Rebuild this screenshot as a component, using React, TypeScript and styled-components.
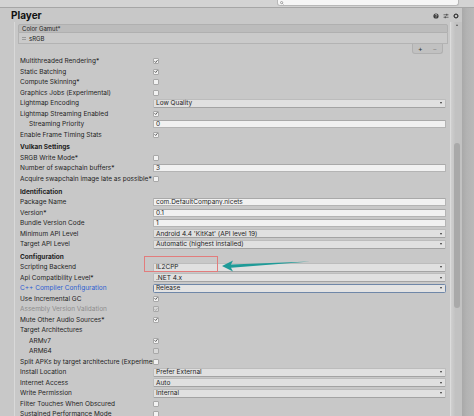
import React from "react";
import styled, { createGlobalStyle, css } from "styled-components";

const Global = createGlobalStyle`
  html, body { margin: 0; padding: 0; background: #c8c8c8; }
  body { font-family: Inter, "Liberation Sans", Arial, sans-serif; }
  #root { width: 474px; height: 416px; }
`;

const Window = styled.div`
  position: relative;
  width: 474px;
  height: 416px;
  overflow: hidden;
  background: #c8c8c8;
  display: flex;
  flex-direction: column;
  color: #1e1e1e;
  font-family: Inter, "Liberation Sans", Arial, sans-serif;
`;

const TopStrip = styled.div`
  flex: none;
  height: 7px;
  background: #d3d3d3;
  border-bottom: 1px solid #a6a6a6;
  display: flex;
`;

const SearchField = styled.div`
  margin-left: 277px;
  width: 182px;
  height: 6px;
  box-sizing: border-box;
  background: #f6f6f6;
  border: 1px solid #b8b8b8;
  border-top: none;
  border-radius: 0 0 3px 3px;
  display: flex;
  align-items: center;
  padding-left: 2px;
`;

const Body = styled.div`
  flex: 1;
  min-height: 0;
  display: flex;
`;

const Panel = styled.div`
  flex: 1;
  min-width: 0;
  display: flex;
  flex-direction: column;
`;

const Edge = styled.div`
  flex: none;
  width: 12px;
  background: linear-gradient(to right, #a9a9a9, #b3b3b3 40%, #b9b9b9);
`;

const TitleBar = styled.div`
  flex: none;
  height: 14px;
  display: flex;
  align-items: center;
  justify-content: space-between;
  padding: 0 3px 0 11px;
`;

const Title = styled.div`
  font-size: 10px;
  font-weight: 700;
  line-height: 14px;
  color: #111;
`;

const TitleIcons = styled.div`
  display: flex;
  gap: 4px;
  align-items: center;
  padding-top: 2px;
`;

const Content = styled.div`
  flex: 1;
  min-height: 0;
  display: flex;
`;

const Gutter = styled.div`
  flex: none;
  width: 14px;
  border-right: 1px solid #d9d9d9;
`;

const Inspector = styled.div`
  flex: 1;
  min-width: 0;
  padding: 2px 2px 0 3px;
  display: flex;
  flex-direction: column;
`;

const Scroll = styled.div`
  flex: none;
  width: 12px;
  box-sizing: border-box;
  border-left: 1px solid #dcdcdc;
  background: linear-gradient(to right, #d0d0d0, #c2c2c2 40%, #c2c2c2);
  display: flex;
  flex-direction: column;
  align-items: center;
`;

const ScrollArrow = styled.div`
  margin-top: 2px;
  width: 0;
  height: 0;
  border-left: 1.5px solid transparent;
  border-right: 1.5px solid transparent;
  border-bottom: 2px solid #555;
`;

const ScrollThumb = styled.div`
  margin-top: 117px;
  width: 6px;
  height: 165px;
  border-radius: 3px;
  background: #a9a9a9;
`;

/* Color gamut list */
const List = styled.div`
  display: flex;
  flex-direction: column;
`;

const ListHeader = styled.div`
  height: 9px;
  box-sizing: border-box;
  background: #bcbcbc;
  border: 1px solid #b0b0b0;
  border-radius: 2px 2px 0 0;
  font-size: 6px;
  line-height: 7px;
  padding-left: 3px;
  color: #222;
`;

const ListBody = styled.div`
  height: 11px;
  box-sizing: border-box;
  background: #cacaca;
  border: 1px solid #b3b3b3;
  border-top: none;
  display: flex;
  align-items: center;
  gap: 3px;
  padding-left: 3px;
  font-size: 6px;
  color: #222;
`;

const Handle = styled.div`
  width: 4px;
  height: 2px;
  border-top: 1px solid #9a9a9a;
  border-bottom: 1px solid #9a9a9a;
  box-sizing: content-box;
  height: 1px;
`;

const ListFooter = styled.div`
  display: flex;
  justify-content: flex-end;
  padding-right: 5px;
`;

const FooterBox = styled.div`
  width: 31px;
  height: 10px;
  box-sizing: border-box;
  background: #c1c1c1;
  border: 1px solid #b0b0b0;
  border-top: none;
  border-radius: 0 0 3px 3px;
  display: flex;
  align-items: center;
  justify-content: space-around;
  font-size: 7px;
  color: #333;
`;

const Minus = styled.span`
  color: #8a8a8a;
`;

/* rows */
const Rows = styled.div`
  margin-top: 1.75px;
  display: flex;
  flex-direction: column;
`;

const Row = styled.div<{ $header?: boolean }>`
  height: 10.5px;
  flex: none;
  display: grid;
  grid-template-columns: 133px 1fr;
  align-items: center;
  padding: 0 2px 0 2px;
  ${(p) =>
    p.$header &&
    css`
      margin-top: 2.3px;
    `}
`;

const Label = styled.div<{
  $indent?: boolean;
  $bold?: boolean;
  $muted?: boolean;
  $blue?: boolean;
}>`
  font-size: 6.5px;
  line-height: 10px;
  white-space: nowrap;
  overflow: hidden;
  padding-left: ${(p) => (p.$indent ? "9px" : "0")};
  font-weight: ${(p) => (p.$bold ? 700 : 400)};
  color: ${(p) => (p.$muted ? "#8d8d8d" : p.$blue ? "#2c5ed2" : "#1e1e1e")};
`;

const Check = styled.div<{ $muted?: boolean }>`
  width: 6px;
  height: 6px;
  box-sizing: border-box;
  background: ${(p) => (p.$muted ? "#d8d8d8" : "#f2f2f2")};
  border: 0.5px solid #a8a8a8;
  border-radius: 1px;
  display: flex;
  align-items: center;
  justify-content: center;
`;

const TextField = styled.div`
  height: 8px;
  box-sizing: border-box;
  background: #f1f1f1;
  border: 0.5px solid #b4b4b4;
  border-top: 1px solid #a9a9a9;
  border-radius: 1px;
  font-size: 6.5px;
  line-height: 7px;
  padding-left: 2px;
  white-space: nowrap;
  overflow: hidden;
  color: #1e1e1e;
`;

const Select = styled.div<{ $focus?: boolean }>`
  height: 9px;
  box-sizing: border-box;
  background: #e0e0e0;
  border: 0.5px solid #bcbcbc;
  border-bottom: 1px solid #a3a3a3;
  border-radius: 1.5px;
  display: flex;
  align-items: center;
  justify-content: space-between;
  font-size: 6.5px;
  padding: 0 3px 0 2px;
  white-space: nowrap;
  color: #1e1e1e;
  ${(p) =>
    p.$focus &&
    css`
      border: 1px solid #6f87a8;
      background: #e3e3e3;
    `}
`;

const Arrow = styled.div`
  width: 0;
  height: 0;
  border-left: 1.6px solid transparent;
  border-right: 1.6px solid transparent;
  border-top: 2px solid #333;
`;

/* annotation overlays */
const RedBox = styled.div`
  position: absolute;
  left: 144px;
  top: 256px;
  width: 74px;
  height: 16px;
  box-sizing: border-box;
  border: 1px solid #e27c7c;
`;

const TealArrow = styled.svg`
  position: absolute;
  left: 218px;
  top: 255px;
`;

type RowData = {
  label: string;
  kind: "check" | "text" | "select" | "none" | "header";
  value?: string;
  checked?: boolean;
  indent?: boolean;
  muted?: boolean;
  blue?: boolean;
  focus?: boolean;
};

const rows: RowData[] = [
  { label: "Multithreaded Rendering*", kind: "check", checked: true },
  { label: "Static Batching", kind: "check", checked: true },
  { label: "Compute Skinning*", kind: "check" },
  { label: "Graphics Jobs (Experimental)", kind: "check" },
  { label: "Lightmap Encoding", kind: "select", value: "Low Quality" },
  { label: "Lightmap Streaming Enabled", kind: "check", checked: true },
  { label: "Streaming Priority", kind: "text", value: "0", indent: true },
  { label: "Enable Frame Timing Stats", kind: "check", checked: true },
  { label: "Vulkan Settings", kind: "header" },
  { label: "SRGB Write Mode*", kind: "check" },
  { label: "Number of swapchain buffers*", kind: "text", value: "3" },
  { label: "Acquire swapchain image late as possible*", kind: "check" },
  { label: "Identification", kind: "header" },
  { label: "Package Name", kind: "text", value: "com.DefaultCompany.nicets" },
  { label: "Version*", kind: "text", value: "0.1" },
  { label: "Bundle Version Code", kind: "text", value: "1" },
  {
    label: "Minimum API Level",
    kind: "select",
    value: "Android 4.4 'KitKat' (API level 19)",
  },
  { label: "Target API Level", kind: "select", value: "Automatic (highest installed)" },
  { label: "Configuration", kind: "header" },
  { label: "Scripting Backend", kind: "select", value: "IL2CPP" },
  { label: "Api Compatibility Level*", kind: "select", value: ".NET 4.x" },
  {
    label: "C++ Compiler Configuration",
    kind: "select",
    value: "Release",
    blue: true,
    focus: true,
  },
  { label: "Use Incremental GC", kind: "check", checked: true },
  { label: "Assembly Version Validation", kind: "check", checked: true, muted: true },
  { label: "Mute Other Audio Sources*", kind: "check", checked: true },
  { label: "Target Architectures", kind: "none" },
  { label: "ARMv7", kind: "check", checked: true, indent: true },
  { label: "ARM64", kind: "check", indent: true, muted: true },
  { label: "Split APKs by target architecture (Experimental)", kind: "check" },
  { label: "Install Location", kind: "select", value: "Prefer External" },
  { label: "Internet Access", kind: "select", value: "Auto" },
  { label: "Write Permission", kind: "select", value: "Internal" },
  { label: "Filter Touches When Obscured", kind: "check" },
  { label: "Sustained Performance Mode", kind: "check" },
];

const CheckMark = ({ muted }: { muted?: boolean }) => (
  <svg width="5" height="5" viewBox="0 0 10 10">
    <path
      d="M2 5.2 L4.2 7.4 L8.2 2.4"
      fill="none"
      stroke={muted ? "#9a9a9a" : "#222"}
      strokeWidth="1.8"
      strokeLinecap="round"
      strokeLinejoin="round"
    />
  </svg>
);

const Value = ({ r }: { r: RowData }) => {
  if (r.kind === "check")
    return (
      <Check $muted={r.muted}>{r.checked && <CheckMark muted={r.muted} />}</Check>
    );
  if (r.kind === "text") return <TextField>{r.value}</TextField>;
  if (r.kind === "select")
    return (
      <Select $focus={r.focus}>
        <span>{r.value}</span>
        <Arrow />
      </Select>
    );
  return <span />;
};

const HelpIcon = () => (
  <svg width="6" height="6" viewBox="0 0 12 12">
    <circle cx="6" cy="6" r="5.2" fill="#3a3a3a" />
    <path d="M4.3 4.6 A1.8 1.8 0 1 1 6.6 6.3 L6 6.9 V7.6" fill="none" stroke="#d0d0d0" strokeWidth="1.4" />
    <circle cx="6" cy="9.3" r="0.8" fill="#d0d0d0" />
  </svg>
);

const PresetIcon = () => (
  <svg width="6" height="6" viewBox="0 0 12 12">
    <path d="M1 3.5 H11 M1 8.5 H11" stroke="#3a3a3a" strokeWidth="1.3" />
    <path d="M7.5 1.5 V5.5 M4.5 6.5 V10.5" stroke="#3a3a3a" strokeWidth="1.6" />
  </svg>
);

const GearIcon = () => (
  <svg width="6" height="6" viewBox="0 0 12 12">
    <circle cx="6" cy="6" r="3.6" fill="none" stroke="#3a3a3a" strokeWidth="2.2" />
    <path
      d="M6 0.5 V2.5 M6 9.5 V11.5 M0.5 6 H2.5 M9.5 6 H11.5 M2.1 2.1 L3.5 3.5 M8.5 8.5 L9.9 9.9 M2.1 9.9 L3.5 8.5 M8.5 3.5 L9.9 2.1"
      stroke="#3a3a3a"
      strokeWidth="1.6"
    />
  </svg>
);

const SearchGlyph = () => (
  <svg width="4" height="4" viewBox="0 0 8 8">
    <circle cx="3.2" cy="3.2" r="2.2" fill="none" stroke="#777" strokeWidth="1.2" />
    <path d="M4.8 4.8 L7 7" stroke="#777" strokeWidth="1.2" />
  </svg>
);

export default function App() {
  return (
    <>
      <Global />
      <Window>
        <TopStrip>
          <SearchField>
            <SearchGlyph />
          </SearchField>
        </TopStrip>
        <Body>
          <Panel>
            <TitleBar>
              <Title>Player</Title>
              <TitleIcons>
                <HelpIcon />
                <PresetIcon />
                <GearIcon />
              </TitleIcons>
            </TitleBar>
            <Content>
              <Gutter />
              <Inspector>
                <List>
                  <ListHeader>Color Gamut*</ListHeader>
                  <ListBody>
                    <Handle />
                    <span>sRGB</span>
                  </ListBody>
                  <ListFooter>
                    <FooterBox>
                      <span>+</span>
                      <Minus>−</Minus>
                    </FooterBox>
                  </ListFooter>
                </List>
                <Rows>
                  {rows.map((r) => (
                    <Row key={r.label} $header={r.kind === "header"}>
                      <Label
                        $indent={r.indent}
                        $bold={r.kind === "header"}
                        $muted={r.label === "Assembly Version Validation"}
                        $blue={r.blue}
                      >
                        {r.label}
                      </Label>
                      <Value r={r} />
                    </Row>
                  ))}
                </Rows>
              </Inspector>
              <Scroll>
                <ScrollArrow />
                <ScrollThumb />
              </Scroll>
            </Content>
          </Panel>
          <Edge />
        </Body>
        <RedBox />
        <TealArrow width="94" height="18" viewBox="0 0 94 18">
          <path
            d="M4 11 L15 5.5 L13 9.4 L92 6.5 L13 12.8 L15 16.5 Z"
            fill="#1f9b98"
          />
        </TealArrow>
      </Window>
    </>
  );
}
